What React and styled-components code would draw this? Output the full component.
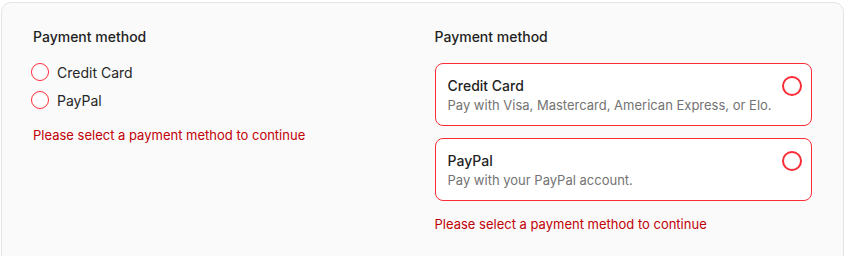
import styled, { createGlobalStyle } from "styled-components";

const Global = createGlobalStyle`
  html, body {
    margin: 0;
    background: #ffffff;
    font-family: Inter, "Noto Sans", sans-serif;
    -webkit-font-smoothing: antialiased;
  }
`;

const Panel = styled.div`
  margin: 2px 2px 0 1px;
  min-height: 300px;
  box-sizing: border-box;
  background: #fafafa;
  border: 1px solid #e5e5e5;
  border-radius: 10px;
  padding: 24px 31px;
  display: grid;
  grid-template-columns: 1fr 1fr;
  column-gap: 24px;
  align-items: start;
`;

const Field = styled.fieldset`
  border: 0;
  margin: 0;
  padding: 0;
  min-width: 0;
`;

const Legend = styled.div`
  font-size: 14px;
  line-height: 20px;
  font-weight: 500;
  color: #1f1f1f;
  margin-bottom: ${(p) => p.$space}px;
`;

const List = styled.div`
  display: flex;
  flex-direction: column;
  gap: ${(p) => p.$gap}px;
`;

const Row = styled.label`
  display: flex;
  align-items: center;
  gap: 8px;
  height: 24px;
  margin-left: -2px;
  font-size: 14px;
  color: #262626;
`;

const Radio = styled.input.attrs({ type: "radio" })`
  appearance: none;
  box-sizing: border-box;
  margin: 0;
  flex: none;
  width: ${(p) => p.$size}px;
  height: ${(p) => p.$size}px;
  border-radius: 50%;
  border: ${(p) => p.$stroke}px solid #fb2c36;
  background: #ffffff;
`;

const Card = styled.label`
  display: flex;
  align-items: flex-start;
  justify-content: space-between;
  background: #ffffff;
  border: 1px solid #fb2c36;
  border-radius: 8px;
  padding: 12px 9px 11px 12px;
`;

const CardText = styled.div`
  display: flex;
  flex-direction: column;
`;

const CardTitle = styled.span`
  font-size: 14px;
  line-height: 20px;
  font-weight: 500;
  color: #1f1f1f;
`;

const CardDesc = styled.span`
  font-size: 13px;
  line-height: 18px;
  color: #737373;
`;

const Error = styled.p`
  margin: ${(p) => p.$top}px 0 0;
  font-size: 13px;
  line-height: 20px;
  color: #c10007;
`;

const methods = [
  { id: "card", title: "Credit Card", desc: "Pay with Visa, Mastercard, American Express, or Elo." },
  { id: "paypal", title: "PayPal", desc: "Pay with your PayPal account." },
];

export default function App() {
  return (
    <>
      <Global />
      <Panel>
        <Field>
          <Legend $space={13}>Payment method</Legend>
          <List $gap={4}>
            {methods.map((m) => (
              <Row key={m.id}>
                <Radio name="pm-simple" $size={18} $stroke={1.5} />
                {m.title}
              </Row>
            ))}
          </List>
          <Error $top={13}>Please select a payment method to continue</Error>
        </Field>
        <Field>
          <Legend $space={16}>Payment method</Legend>
          <List $gap={12}>
            {methods.map((m) => (
              <Card key={m.id}>
                <CardText>
                  <CardTitle>{m.title}</CardTitle>
                  <CardDesc>{m.desc}</CardDesc>
                </CardText>
                <Radio name="pm-card" $size={20} $stroke={2} />
              </Card>
            ))}
          </List>
          <Error $top={13}>Please select a payment method to continue</Error>
        </Field>
      </Panel>
    </>
  );
}
